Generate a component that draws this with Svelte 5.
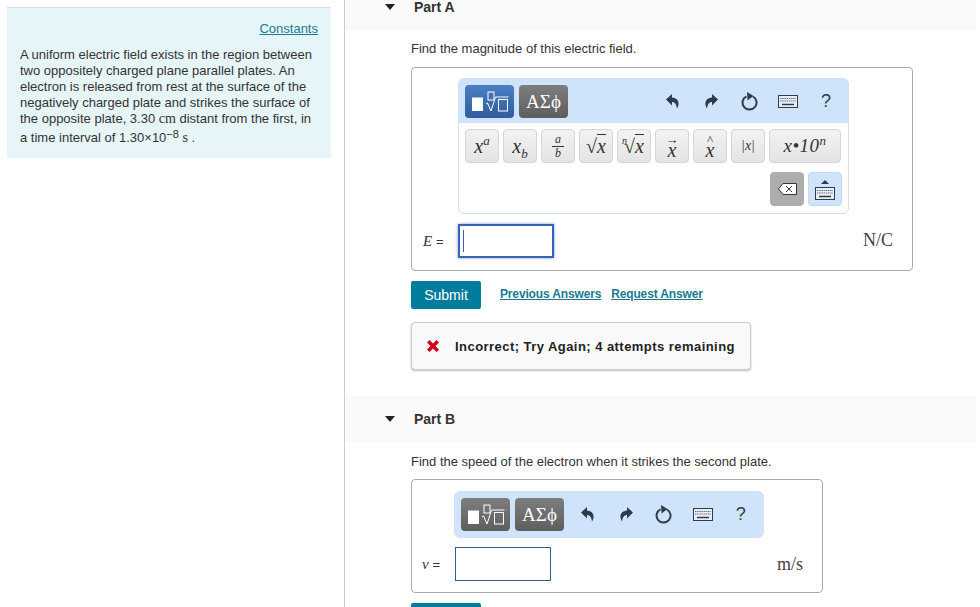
<script>
  const keys = ["power", "sub", "frac", "sqrt", "nroot", "vec", "hat", "abs"];
</script>

{#snippet templatesIcon()}
  <svg width="38" height="26" viewBox="0 0 38 26" fill="none">
    <rect x="1" y="8.500" width="11" height="13.500" fill="#fff" />
    <rect x="17" y="3" width="6" height="8" stroke="#fff" />
    <path d="M15 15l1.500-1 3.500 8 4.500-14H37.500" stroke="#fff" />
    <rect x="27.500" y="10.500" width="9" height="11.500" stroke="#fff" />
  </svg>
{/snippet}

{#snippet tools()}
  <div class="tools">
    <button class="tool" aria-label="Undo">
      <svg width="16" height="17" viewBox="0 0 16 17"><path d="M7 1L1 6.500 7 12.500V9c2.500 0 4.500 2 5 6.500C15 11 14 5 7 4.500z" fill="#2f3b4a" /></svg>
    </button>
    <button class="tool" aria-label="Redo">
      <svg width="16" height="17" viewBox="0 0 16 17"><path d="M9 1l6 5.500L9 12.500V9c-2.500 0-4.500 2-5 6.500C1 11 2 5 9 4.500z" fill="#2f3b4a" /></svg>
    </button>
    <button class="tool" aria-label="Reset">
      <svg width="18" height="20" viewBox="0 0 18 20" fill="none">
        <path d="M12 4.500A7 7 0 1 1 5.500 4.300" stroke="#2f3b4a" stroke-width="2" />
        <path d="M6 0l6.500 4L6.500 8.500z" fill="#2f3b4a" />
      </svg>
    </button>
    <button class="tool" aria-label="Keyboard">
      <svg width="20" height="13" viewBox="0 0 20 13" fill="none">
        <rect x="0.500" y="0.500" width="19" height="12" fill="#e8eef5" stroke="#2f3b4a" />
        <path d="M2 3.500h16M2 6h16" stroke="#68727f" stroke-dasharray="1.500 .7" />
        <path d="M4 9.500h12" stroke="#2f3b4a" stroke-width="1.500" />
      </svg>
    </button>
    <button class="tool help">?</button>
  </div>
{/snippet}

{#snippet topRow()}
  <div class="top-row">
    <button class="mode active-mode" aria-label="Templates">{@render templatesIcon()}</button>
    <button class="mode symbols">ΑΣϕ</button>
    {@render tools()}
  </div>
{/snippet}

<div class="page">
  <aside class="sidebar">
    <div class="info">
      <a class="constants" href="#top">Constants</a>
      <p>
        A uniform electric field exists in the region between two oppositely charged plane parallel plates. An electron is released from rest at the surface of the negatively charged plate and strikes the surface of the opposite plate, 3.30 <span class="serif">cm</span> distant from the first, in a time interval of 1.30×10<sup>−8</sup> <span class="serif">s</span> .
      </p>
    </div>
  </aside>

  <main class="content">
    <section class="part">
      <header class="part-head"><span class="arrow"></span>Part A</header>
      <div class="part-body">
        <p class="question">Find the magnitude of this electric field.</p>
        <div class="answer-box box-a">
          <div class="toolbar toolbar-a">
            {@render topRow()}
            <div class="palette">
              <div class="keys">
                {#each keys as key}
                  <button class="key">
                    {#if key === "power"}
                      <i class="big">x<sup>a</sup></i>
                    {:else if key === "sub"}
                      <i class="big">x<sub>b</sub></i>
                    {:else if key === "frac"}
                      <span class="frac"><i>a</i><i class="under">b</i></span>
                    {:else if key === "sqrt"}
                      <span class="big">√<i class="over">x</i></span>
                    {:else if key === "nroot"}
                      <span class="big root"><i class="index">n</i>√<i class="over">x</i></span>
                    {:else if key === "vec"}
                      <span class="accent"><b>→</b><i class="big">x</i></span>
                    {:else if key === "hat"}
                      <span class="accent"><b class="hat">^</b><i class="big">x</i></span>
                    {:else}
                      <i class="abs">|x|</i>
                    {/if}
                  </button>
                {/each}
                <button class="key wide"><i>x•10<sup>n</sup></i></button>
              </div>
              <div class="keys end">
                <button class="key backspace" aria-label="Backspace">
                  <svg width="19" height="12" viewBox="0 0 19 12" fill="#fff" stroke="#333">
                    <path d="M5 .5h13.500v11H5L.5 6z" />
                    <path d="M8 3l6 6m0-6l-6 6" />
                  </svg>
                </button>
                <button class="key kb-toggle" aria-label="Hide keyboard">
                  <svg width="20" height="21" viewBox="0 0 20 21" fill="none">
                    <path d="M6 5l4-4 4 4z" fill="#2f3b4a" />
                    <rect x="0.500" y="8.500" width="19" height="12" fill="#e8eef5" stroke="#2f3b4a" />
                    <path d="M2 11.500h16M2 14h16" stroke="#68727f" stroke-dasharray="1.500 .7" />
                    <path d="M4 17.500h12" stroke="#2f3b4a" stroke-width="1.500" />
                  </svg>
                </button>
              </div>
            </div>
          </div>
          <div class="answer-row">
            <span class="label"><i>E</i> <small>=</small></span>
            <div class="input focused"><span class="caret"></span></div>
            <span class="unit">N/C</span>
          </div>
        </div>
        <div class="actions">
          <button class="submit">Submit</button>
          <a href="#top">Previous Answers</a>
          <a href="#top">Request Answer</a>
        </div>
        <div class="feedback">
          <svg width="14" height="14" viewBox="0 0 14 14"><path d="M1 3.500L3.500 1 7 4.500 10.500 1 13 3.500 9.500 7 13 10.500 10.500 13 7 9.500 3.500 13 1 10.500 4.500 7z" fill="#d0021b" /></svg>
          <span>Incorrect; Try Again; 4 attempts remaining</span>
        </div>
      </div>
    </section>

    <section class="part part-b">
      <header class="part-head"><span class="arrow"></span>Part B</header>
      <div class="part-body">
        <p class="question">Find the speed of the electron when it strikes the second plate.</p>
        <div class="answer-box box-b">
          <div class="toolbar toolbar-b">
            {@render topRow()}
          </div>
          <div class="answer-row">
            <span class="label"><i>v</i> <small>=</small></span>
            <div class="input"></div>
            <span class="unit">m/s</span>
          </div>
        </div>
        <div class="actions">
          <button class="submit"></button>
        </div>
      </div>
    </section>
  </main>
</div>

<style>
  :global(body) {
    margin: 0;
    overflow: hidden;
    background: #fff;
  }

  .page {
    display: flex;
    width: 980px;
    height: 607px;
    overflow: hidden;
    font-family: "Liberation Sans", Arial, sans-serif;
    font-size: 13px;
    color: #333;
  }

  .serif {
    font-family: "Liberation Serif", serif;
    font-size: 14px;
  }

  .sidebar {
    flex: none;
    box-sizing: border-box;
    width: 345px;
    padding: 7px 13px 0 7px;
    border-right: 1px solid #ccc;
  }

  .info {
    display: flex;
    flex-direction: column;
    height: 151px;
    box-sizing: border-box;
    padding: 13px 13px 0;
    background: #e6f5f8;
    border-top: 1px solid #e0e0e0;
  }

  .constants {
    align-self: flex-end;
    line-height: 16px;
    color: #1a7a94;
  }

  .info p {
    margin: 10px 0 0;
    line-height: 16px;
  }

  .info sup {
    font-size: 11px;
    line-height: 14px;
    vertical-align: 4px;
  }

  .content {
    flex: none;
    width: 631px;
    margin-top: -16px;
  }

  .part-b {
    margin-top: 26px;
  }

  .part-head {
    display: flex;
    align-items: center;
    height: 46px;
    padding-left: 40px;
    background: #f9f9f9;
    font-weight: bold;
    font-size: 14px;
    line-height: 16px;
    color: #333;
  }

  .arrow {
    width: 0;
    height: 0;
    margin-right: 19px;
    border-left: 5.500px solid transparent;
    border-right: 5.500px solid transparent;
    border-top: 6px solid #222;
  }

  .part-body {
    padding: 11px 0 0 66px;
  }

  .part-b .part-body {
    padding-top: 12px;
  }

  .question {
    margin: 0 0 10px;
    line-height: 16px;
    font-size: 13px;
  }

  .part-b .question {
    margin-bottom: 9px;
  }

  .answer-box {
    box-sizing: border-box;
    border: 1px solid #aaa;
    border-radius: 4px;
  }

  .box-a {
    width: 502px;
    height: 204px;
    padding: 10px 0 0 46px;
  }

  .box-b {
    width: 412px;
    height: 114px;
    padding: 11px 0 0 42px;
  }

  .toolbar {
    box-sizing: border-box;
    border-radius: 6px;
    background: #cfe4fb;
  }

  .toolbar-a {
    width: 391px;
    height: 136px;
    border: 1px solid #d3e1ef;
  }

  .toolbar-b {
    width: 310px;
    height: 47px;
  }

  .top-row {
    display: flex;
    align-items: flex-start;
    gap: 5px;
    height: 33px;
    padding: 6px 0 5px 6px;
  }

  .toolbar-b .top-row {
    padding: 7px 0 0 7px;
  }

  button {
    padding: 0;
    border: 0;
    background: none;
    font: inherit;
    color: inherit;
  }

  .mode {
    display: flex;
    align-items: center;
    justify-content: center;
    width: 49px;
    height: 33px;
    border-radius: 4px;
    background: linear-gradient(#7d7d7d, #5e5e5e);
    color: #fff;
    font-family: "Liberation Serif", serif;
    font-size: 19px;
  }

  .toolbar-a .active-mode {
    background: linear-gradient(#4b7fc4, #2f5c9e);
  }

  .tools {
    display: flex;
    margin-left: auto;
    padding-right: 3px;
  }

  .toolbar-b .tools {
    margin-left: 0;
  }

  .tool {
    display: flex;
    align-items: center;
    justify-content: center;
    width: 38.200px;
    height: 33px;
  }

  .help {
    font-size: 18px;
    color: #2f3b4a;
  }

  .palette {
    height: 90px;
    box-sizing: border-box;
    padding: 6px 6px 0;
    background: #fff;
    border-radius: 0 0 5px 5px;
  }

  .keys {
    display: flex;
    gap: 4px;
  }

  .end {
    justify-content: flex-end;
    margin-top: 9px;
  }

  .key {
    display: flex;
    align-items: center;
    justify-content: center;
    box-sizing: border-box;
    width: 34px;
    height: 34px;
    border: 1px solid #d6d6d6;
    border-radius: 4px;
    background: linear-gradient(#f2f2f2, #e4e4e4);
    font-family: "Liberation Serif", serif;
    font-size: 16px;
    color: #333;
  }

  .key sup, .key sub {
    font-size: 13px;
    line-height: 0;
  }

  .big {
    font-size: 20px;
  }

  .over {
    border-top: 1px solid #333;
  }

  .root {
    position: relative;
  }

  .index {
    position: absolute;
    top: 0;
    left: -2px;
    font-size: 10px;
  }

  .frac {
    display: flex;
    flex-direction: column;
    align-items: center;
    font-size: 12px;
    line-height: 13px;
    width: 12px;
  }

  .under {
    align-self: stretch;
    text-align: center;
    border-top: 1px solid #333;
  }

  .accent {
    display: flex;
    flex-direction: column;
    align-items: center;
    line-height: 14px;
  }

  .accent b {
    font-weight: normal;
    font-size: 13px;
    line-height: 7px;
    height: 7px;
  }

  .abs {
    font-size: 14px;
  }

  .wide {
    width: 72px;
    font-size: 19px;
    letter-spacing: 0.500px;
  }

  .backspace {
    background: #adadad;
    border-color: #adadad;
  }

  .kb-toggle {
    background: #cfe4fb;
    border-color: #c3d9f0;
  }

  .answer-row {
    display: flex;
    align-items: center;
    height: 34px;
    margin-top: 10px;
  }

  .box-a .answer-row {
    margin-left: -35px;
  }

  .box-b .answer-row {
    margin-left: -32px;
    margin-top: 9px;
  }

  .label {
    flex: none;
    width: 35px;
    font-family: "Liberation Serif", serif;
    font-size: 15px;
  }

  .label small {
    font-family: "Liberation Sans", sans-serif;
    font-size: 13px;
  }

  .box-b .label {
    width: 33px;
  }

  .input {
    flex: none;
    box-sizing: border-box;
    display: flex;
    align-items: center;
    width: 96px;
    height: 34px;
    padding-left: 3px;
    border: 1px solid #33608f;
  }

  .focused {
    border: 2px solid #3a62b4;
    box-shadow: 0 0 3px #7d9bd8;
  }

  .caret {
    width: 1px;
    height: 22px;
    background: #3a62b4;
  }

  .unit {
    margin-left: auto;
    padding-bottom: 2px;
    font-family: "Liberation Serif", serif;
    font-size: 18px;
    color: #444;
  }

  .box-a .unit {
    padding-right: 19px;
  }

  .box-b .unit {
    padding-right: 19px;
    padding-bottom: 0;
  }

  .actions {
    display: flex;
    align-items: center;
    gap: 10px;
    margin-top: 10px;
  }

  .submit {
    width: 70px;
    height: 28px;
    margin-right: 9px;
    border-radius: 2px;
    background: #007c9c;
    color: #fff;
    font-size: 14px;
  }

  .actions a {
    padding-bottom: 2px;
    font-size: 12px;
    font-weight: bold;
    letter-spacing: -0.150px;
    color: #1a7a94;
  }

  .feedback {
    display: flex;
    align-items: center;
    gap: 15px;
    box-sizing: border-box;
    width: 340px;
    height: 48px;
    margin-top: 13px;
    padding-left: 14px;
    border: 1px solid #ccc;
    border-radius: 4px;
    background: #f9f9f9;
    box-shadow: 0 1px 2px #bbb;
    font-size: 13px;
    font-weight: bold;
    letter-spacing: 0.450px;
    color: #222;
  }
</style>
